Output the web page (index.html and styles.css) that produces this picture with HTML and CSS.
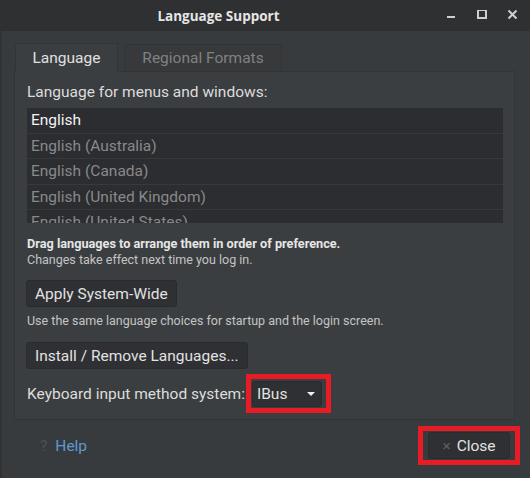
FILE: index.html
```html
<!DOCTYPE html>
<html>
<head>
<meta charset="utf-8">
<title>Language Support</title>
<link rel="stylesheet" href="styles.css">
</head>
<body>
<div class="window">
  <div class="titlebar">
    <div class="title">Language Support</div>
    <div class="controls">
      <span class="ctl"><svg width="10" height="10" viewBox="0 0 10 10"><rect x="1" y="6" width="8" height="2" fill="#cfcfcf"/></svg></span>
      <span class="ctl"><svg width="10" height="10" viewBox="0 0 10 10"><rect x="1" y="0" width="8" height="8" fill="none" stroke="#cfcfcf" stroke-width="2"/></svg></span>
      <span class="ctl"><svg width="11" height="11" viewBox="0 0 11 11"><path d="M1.5 1.5 L9.5 9.5 M9.5 1.5 L1.5 9.5" stroke="#cfcfcf" stroke-width="2"/></svg></span>
    </div>
  </div>
  <div class="content">
    <div class="notebook">
      <div class="tabs">
        <div class="tab active">Language</div>
        <div class="tab">Regional Formats</div>
      </div>
      <div class="page">
        <div class="label">Language for menus and windows:</div>
        <div class="list">
          <div class="row first">English</div>
          <div class="row">English (Australia)</div>
          <div class="row">English (Canada)</div>
          <div class="row">English (United Kingdom)</div>
          <div class="row">English (United States)</div>
        </div>
        <div class="hint">
          <div class="hint-bold">Drag languages to arrange them in order of preference.</div>
          <div class="hint-small">Changes take effect next time you log in.</div>
        </div>
        <div><span class="btn">Apply System-Wide</span></div>
        <div class="hint-small use">Use the same language choices for startup and the login screen.</div>
        <div><span class="btn">Install / Remove Languages...</span></div>
        <div class="kbd-row">
          <span class="label">Keyboard input method system:</span>
          <span class="combo-wrap">
            <span class="btn combo"><span>IBus</span><span class="arrow"></span></span>
            <span class="highlight hl-combo"></span>
          </span>
        </div>
      </div>
    </div>
    <div class="actions">
      <span class="help"><span class="qmark">?</span><span class="help-text">Help</span></span>
      <span class="close-wrap">
        <span class="btn close"><span class="xmark">×</span>Close</span>
        <span class="highlight hl-close"></span>
      </span>
    </div>
  </div>
</div>
</body>
</html>
```

FILE: styles.css
```css
html, body {
  margin: 0;
  padding: 0;
}
body {
  width: 530px;
  height: 478px;
  background: #383b3d;
  font-family: Roboto, "Noto Sans", sans-serif;
  color: #dcdcdc;
  overflow: hidden;
}
.window {
  display: flex;
  flex-direction: column;
  height: 478px;
  border-left: 2px solid #303234;
  box-sizing: border-box;
}
.titlebar {
  height: 31px;
  background: #2f3031;
  display: flex;
  align-items: center;
  margin-left: -2px;
}
.title {
  flex: 1;
  text-align: center;
  font-family: "Open Sans", Roboto, sans-serif;
  font-weight: bold;
  font-size: 13.5px;
  color: #e6e6e6;
  padding-left: 2px;
}
.controls {
  display: flex;
  padding-right: 2px;
}
.ctl {
  width: 31px;
  height: 31px;
  display: flex;
  align-items: center;
  justify-content: center;
}
.ctl svg {
  display: block;
  margin-top: -2px;
}
.content {
  flex: 1;
  display: flex;
  flex-direction: column;
  padding: 12px 15px 0 12px;
}
.tabs {
  display: flex;
  gap: 6px;
  height: 28px;
  padding-left: 1px;
}
.tab {
  height: 27px;
  box-sizing: border-box;
  display: flex;
  align-items: center;
  justify-content: center;
  font-size: 15.5px;
  color: #7f8284;
  background: #37393b;
  border: 1px solid #323537;
  border-bottom: none;
  border-radius: 2px 2px 0 0;
  margin-top: 1px;
  width: 158px;
}
.tab.active {
  color: #e0e0e0;
  background: #3b3e40;
  height: 29px;
  margin-top: 0;
  position: relative;
  z-index: 1;
  width: 103px;
}
.page {
  border: 1px solid #323537;
  background: #3b3e40;
  height: 349px;
  box-sizing: border-box;
  padding: 11px 11px 0 12px;
  display: flex;
  flex-direction: column;
}
.label {
  font-size: 15.5px;
  line-height: 18px;
  color: #dcdcdc;
}
.list {
  margin-top: 7px;
  height: 115px;
  overflow: hidden;
  background: #2c2d30;
}
.row {
  height: 24.5px;
  line-height: 24.5px;
  border-bottom: 1px solid #37393c;
  padding-left: 4px;
  font-size: 15.5px;
  color: #88898b;
  white-space: nowrap;
}
.row.first {
  color: #f2f2f2;
}
.hint {
  margin-top: 13px;
}
.hint-bold {
  font-size: 12.7px;
  font-weight: bold;
  line-height: 16px;
  color: #e6e6e6;
}
.hint-small {
  font-size: 12.5px;
  line-height: 16px;
  color: #c4c4c4;
}
.btn {
  display: inline-flex;
  align-items: center;
  height: 27px;
  box-sizing: border-box;
  padding: 0 8px;
  background: #2e3033;
  border: 1px solid #292b2d;
  border-radius: 3px;
  font-size: 15.5px;
  color: #e2e2e2;
  margin-left: -1px;
}
.hint + div .btn {
  margin-top: 12px;
}
.use {
  margin-top: 6px;
}
.use + div .btn {
  margin-top: 13px;
}
.kbd-row {
  display: flex;
  align-items: center;
  margin-top: 12px;
}
.combo-wrap {
  position: relative;
  margin-left: 7px;
  display: inline-flex;
}
.combo {
  width: 70px;
  height: 26px;
  justify-content: space-between;
  padding: 0 6px 0 4px;
  margin-left: 0;
}
.arrow {
  width: 0;
  height: 0;
  border-left: 4.5px solid transparent;
  border-right: 4.5px solid transparent;
  border-top: 4px solid #f0f0f0;
}
.highlight {
  position: absolute;
  border: 5px solid #e81c25;
  box-sizing: border-box;
  pointer-events: none;
}
.hl-combo {
  left: -6px;
  right: -9px;
  top: -7px;
  bottom: -6px;
}
.actions {
  display: flex;
  justify-content: space-between;
  align-items: center;
  padding: 12px 5px 0 26px;
}
.help {
  display: inline-flex;
  align-items: center;
  font-size: 15.5px;
}
.qmark {
  color: #4d5154;
  margin-right: 8px;
}
.help-text {
  color: #5f98d1;
}
.close-wrap {
  position: relative;
  display: inline-flex;
}
.close {
  width: 82px;
  justify-content: center;
  padding: 0;
  margin-left: 0;
}
.xmark {
  color: #5a5e61;
  margin-right: 6px;
  font-size: 15.5px;
}
.hl-close {
  left: -10px;
  right: -10px;
  top: -6px;
  bottom: -6px;
}
```
